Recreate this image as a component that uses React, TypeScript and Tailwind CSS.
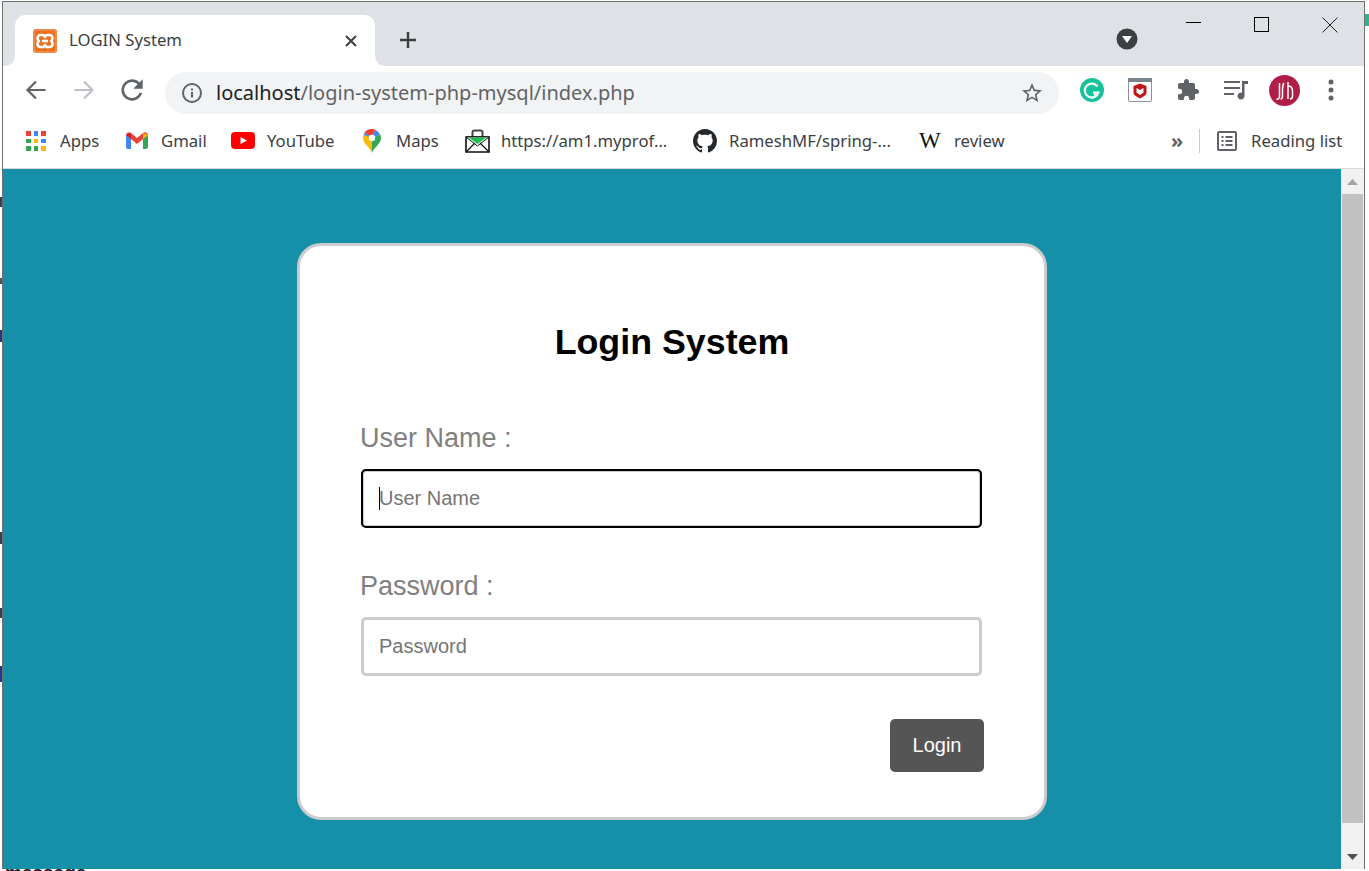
const UI_FONT = "font-['Noto_Sans',sans-serif]";

function Bookmark({ icon, label, textWidth, gap, ml }: { icon: React.ReactNode; label: string; textWidth: string; gap: string; ml: string }) {
  return (
    <div className={`flex shrink-0 items-center ${ml}`}>
      {icon}
      <span className={`${gap} ${textWidth} whitespace-nowrap text-[16.7px] text-[#3c4043]`}>{label}</span>
    </div>
  );
}

function AppsIcon() {
  const colors = ["#ea4335", "#4285f4", "#ea4335", "#34a853", "#fbbc04", "#4285f4", "#34a853", "#34a853", "#fbbc04"];
  return (
    <div className="grid h-[20px] w-[20px] grid-cols-3 gap-[3px]">
      {colors.map((c, i) => (
        <span key={i} className="block h-[4.6px] w-[4.6px]" style={{ background: c }} />
      ))}
    </div>
  );
}

function GmailIcon() {
  return (
    <svg width="22" height="17" viewBox="0 0 22 17">
      <path d="M0 3v12a2 2 0 0 0 2 2h3V7z" fill="#4285f4" />
      <path d="M22 3v12a2 2 0 0 1-2 2h-3V7z" fill="#34a853" />
      <path d="M0 3a3 3 0 0 1 5-2l6 5 6-5a3 3 0 0 1 5 2l-5 4-6 5-6-5z" fill="#ea4335" />
      <path d="M17 1l5 2-5 4z" fill="#fbbc04" />
      <path d="M0 3l5 4V1z" fill="#c5221f" />
    </svg>
  );
}

function YouTubeIcon() {
  return (
    <svg width="24" height="17" viewBox="0 0 24 17">
      <rect width="24" height="17" rx="4" fill="#ff0000" />
      <path d="M9.500 5l6.500 3.500L9.500 12z" fill="#fff" />
    </svg>
  );
}

function MapsIcon() {
  return (
    <svg width="18" height="24" viewBox="0 0 18 24">
      <path d="M9 24C8 19 0 15 0 9c0-1 .3-3 1-4l8 4z" fill="#fbbc04" />
      <path d="M9 24c1-5 9-9 9-15 0-1-.3-2.500-1-3.500L9 9z" fill="#34a853" />
      <path d="M1.500 3.500A9 9 0 0 1 9 0c1.500 0 2.500.3 3.500 1L9 9z" fill="#ea4335" />
      <path d="M12.500 1A9 9 0 0 1 17 5.500L9 9z" fill="#4285f4" />
      <path d="M1.500 3.500L9 9 1 6z" fill="#4285f4" />
      <circle cx="9" cy="9" r="3.200" fill="#fff" />
    </svg>
  );
}

function MailIcon() {
  return (
    <svg width="25" height="24" viewBox="0 0 25 24">
      <path d="M7.500 8V3.500A2 2 0 0 1 9.500 1.500h6a2 2 0 0 1 2 2V8" fill="none" stroke="#444" strokeWidth="2" />
      <path d="M1 8h23v15H1z" fill="#fff" stroke="#111" strokeWidth="1.600" />
      <path d="M1 8h23l-11.500 9z" fill="#fff" stroke="#111" strokeWidth="1" />
      <path d="M3.500 8.500h18l-9 6.500z" fill="#1fc050" />
      <path d="M1 23l9-9M24 23l-9-9" stroke="#111" strokeWidth="1.300" />
    </svg>
  );
}

function GithubIcon() {
  return (
    <svg width="24" height="24" viewBox="0 0 16 16" fill="#24292e">
      <path d="M8 0C3.580 0 0 3.580 0 8c0 3.540 2.290 6.530 5.470 7.590.4.070.55-.17.55-.38 0-.19-.01-.82-.01-1.490-2.010.37-2.530-.49-2.690-.94-.09-.23-.48-.94-.82-1.130-.28-.15-.68-.52-.01-.53.63-.01 1.080.58 1.230.82.72 1.210 1.870.87 2.330.66.070-.52.28-.87.51-1.070-1.780-.2-3.640-.89-3.640-3.950 0-.87.31-1.590.82-2.150-.08-.2-.36-1.020.08-2.120 0 0 .67-.21 2.200.82.64-.18 1.320-.27 2-.27s1.360.09 2 .27c1.530-1.040 2.200-.82 2.200-.82.44 1.100.16 1.920.08 2.120.51.56.82 1.270.82 2.150 0 3.070-1.870 3.750-3.650 3.950.29.25.54.73.54 1.480 0 1.070-.01 1.930-.01 2.200 0 .21.15.46.55.38A8.010 8.010 0 0 0 16 8c0-4.420-3.580-8-8-8z" />
    </svg>
  );
}

function GrammarlyIcon() {
  return (
    <svg width="24" height="24" viewBox="0 0 24 24">
      <circle cx="12" cy="12" r="12" fill="#15c39a" />
      <path d="M17.500 8.500A7 7 0 1 0 18.500 14.500H13" fill="none" stroke="#fff" strokeWidth="2.200" />
      <path d="M14 17.500l4-3.500" stroke="#fff" strokeWidth="2" />
    </svg>
  );
}

function McAfeeIcon() {
  return (
    <svg width="24" height="24" viewBox="0 0 24 24">
      <rect x="0.500" y="0.500" width="23" height="23" rx="1.500" fill="#fff" stroke="#8a9299" />
      <rect x="0" y="0" width="24" height="4" fill="#78848c" />
      <path d="M5.500 8l6.500-2.500L18.500 8v7c0 2-3 3.500-6.500 5.500-3.500-2-6.500-3.500-6.500-5.500z" fill="#c01818" />
      <path d="M8.500 10l3.500 2 3.500-2v4.500l-3.500 2.500-3.500-2.500z" fill="#fff" />
    </svg>
  );
}

function WindowIcons() {
  return (
    <div className="flex shrink-0 items-start">
      <span className="mt-[20px] h-px w-[15px] bg-black" />
      <span className="ml-[53px] mt-[15px] h-[15px] w-[15px] border border-black" />
      <svg className="ml-[53px] mt-[15px] mr-[26px]" width="16" height="16" viewBox="0 0 16 16">
        <path d="M0.500 0.500l15 15M15.500 0.500l-15 15" stroke="#222" strokeWidth="1" />
      </svg>
    </div>
  );
}

export default function App() {
  return (
    <div className={`relative h-[871px] w-[1369px] overflow-hidden bg-white ${UI_FONT}`}>
      {/* bits of the window behind the browser */}
      <span className="absolute left-0 top-[197px] h-[10px] w-[2px] bg-[#334155]" />
      <span className="absolute left-0 top-[278px] h-[6px] w-[2px] bg-[#475569]" />
      <span className="absolute left-0 top-[330px] h-[12px] w-[2px] bg-[#1e3a8a]" />
      <span className="absolute left-0 top-[532px] h-[12px] w-[2px] bg-[#334155]" />
      <span className="absolute left-0 top-[608px] h-[10px] w-[2px] bg-[#334155]" />
      <span className="absolute left-0 top-[666px] h-[16px] w-[2px] bg-[#1e3a8a]" />
      <span className="absolute left-[1365px] top-[14px] h-[12px] w-[4px] bg-[#2fb58c]" />
      <span className="absolute left-[5px] top-[863px] text-[19px] font-bold leading-[20px] font-['Liberation_Sans',sans-serif] text-[#222]">message</span>

      <div className="relative ml-[2px] mt-px flex h-[868px] w-[1363px] flex-col border-x-[1px] border-t-[1px] border-[#707070] bg-white">
        {/* tab strip */}
        <div className="flex h-[64px] bg-[#dee1e6]">
          <div className="relative ml-[12px] mt-[13px] flex h-[51px] w-[360px] shrink-0 items-center rounded-t-[10px] bg-white">
            <svg className="absolute bottom-0 left-[-10px]" width="10" height="10" viewBox="0 0 10 10">
              <path d="M10 0v10H0a10 10 0 0 0 10-10z" fill="#fff" />
            </svg>
            <svg className="absolute bottom-0 right-[-10px]" width="10" height="10" viewBox="0 0 10 10">
              <path d="M0 0v10h10a10 10 0 0 1-10-10z" fill="#fff" />
            </svg>
            <svg className="ml-[18px] shrink-0" width="24" height="24" viewBox="0 0 24 24">
              <rect width="24" height="24" rx="3" fill="#e8701f" />
              <rect x="1" y="1" width="22" height="22" rx="2" fill="none" stroke="#f5a56e" strokeWidth="1" />
              <path d="M10.500 6H7.500C5.500 6 4.500 7.500 4.500 9.500c0 1 .7 2 1.500 2.500-.8.5-1.500 1.500-1.500 2.500 0 2 1 3.500 3 3.500h3l1.500-2 1.500 2h3c2 0 3-1.500 3-3.500 0-1-.7-2-1.500-2.500.8-.5 1.500-1.500 1.500-2.500 0-2-1-3.500-3-3.500h-3L12 8z" fill="none" stroke="#fff" strokeWidth="2.600" strokeLinejoin="round" />
              <path d="M9 12h6" stroke="#fff" strokeWidth="2.600" />
            </svg>
            <span className="ml-[12px] mb-[2px] w-[240px] whitespace-nowrap text-[16.7px] text-[#3c4043]">LOGIN System</span>
            <svg className="ml-[36px] shrink-0" width="12" height="12" viewBox="0 0 12 12">
              <path d="M1 1l10 10M11 1L1 11" stroke="#3c4043" strokeWidth="2" />
            </svg>
          </div>
          <svg className="ml-[24px] mt-[29px] shrink-0" width="18" height="18" viewBox="0 0 18 18">
            <path d="M9 1v16M1 9h16" stroke="#3c4043" strokeWidth="2.400" />
          </svg>
          <svg className="ml-[699px] mt-[26px] shrink-0" width="22" height="22" viewBox="0 0 22 22">
            <circle cx="11" cy="11" r="10.500" fill="#3c4043" />
            <path d="M6 8h10l-5 7z" fill="#fff" />
          </svg>
          <div className="ml-[48px]">
            <WindowIcons />
          </div>
        </div>

        {/* toolbar */}
        <div className="flex h-[48px] items-center bg-white">
          <svg className="ml-[22px]" width="22" height="22" viewBox="0 0 22 22">
            <path d="M20.500 11H2.500M11 2.500L2.500 11l8.500 8.500" fill="none" stroke="#5f6368" strokeWidth="2.200" />
          </svg>
          <svg className="ml-[26px]" width="22" height="22" viewBox="0 0 22 22">
            <path d="M1.500 11h18M11 2.500l8.500 8.500-8.500 8.500" fill="none" stroke="#bdc1c6" strokeWidth="2.200" />
          </svg>
          <svg className="ml-[21px]" width="32" height="32" viewBox="0 0 24 24" fill="#5f6368">
            <path d="M17.650 6.350A7.960 7.960 0 0 0 12 4a8 8 0 1 0 7.730 10h-2.080A6 6 0 1 1 12 6c1.660 0 3.140.69 4.220 1.780L13 11h7V4l-2.350 2.350z" />
          </svg>
          <div className="ml-[17px] flex h-[42px] w-[894px] items-center self-end rounded-full bg-[#f1f3f4]">
            <svg className="ml-[17px]" width="20" height="20" viewBox="0 0 20 20">
              <circle cx="10" cy="10" r="9" fill="none" stroke="#5f6368" strokeWidth="2" />
              <path d="M10 9v5.500M10 5.500v2" stroke="#5f6368" strokeWidth="2" />
            </svg>
            <span className="ml-[14px] whitespace-nowrap text-[20px] text-[#202124]">
              localhost<span className="text-[#5f6368]">/login-system-php-mysql/index.php</span>
            </span>
            <svg className="ml-auto mr-[15px]" width="24" height="24" viewBox="0 0 24 24" fill="#5f6368">
              <path d="M22 9.240l-7.190-.62L12 2 9.190 8.630 2 9.240l5.460 4.730L5.820 21 12 17.270 18.180 21l-1.630-7.030L22 9.240zM12 15.400l-3.760 2.270 1-4.280-3.320-2.880 4.380-.38L12 6.100l1.710 4.040 4.380.38-3.320 2.880 1 4.280L12 15.400z" />
            </svg>
          </div>
          <div className="ml-[21px]"><GrammarlyIcon /></div>
          <div className="ml-[24px]"><McAfeeIcon /></div>
          <svg className="ml-[24px]" width="24" height="24" viewBox="0 0 24 24" fill="#5f6368">
            <path d="M20.500 11H19V7c0-1.100-.9-2-2-2h-4V3.500C13 2.120 11.880 1 10.500 1S8 2.120 8 3.500V5H4c-1.100 0-1.990.9-1.990 2v3.800H3.500c1.490 0 2.700 1.210 2.700 2.700s-1.210 2.700-2.700 2.700H2V20c0 1.100.9 2 2 2h3.800v-1.500c0-1.490 1.210-2.700 2.700-2.700 1.490 0 2.700 1.210 2.700 2.700V22H17c1.100 0 2-.9 2-2v-4h1.500c1.380 0 2.500-1.120 2.500-2.500S21.880 11 20.500 11z" />
          </svg>
          <svg className="ml-[24px]" width="24" height="24" viewBox="0 0 24 24" fill="#5f6368">
            <path d="M0 3h16v2H0zM0 9h16v2H0zM0 15h10v2H0z" />
            <path d="M18 3h6v3h-3.500v12a3.500 3.500 0 1 1-2.500-3.300z" />
          </svg>
          <svg className="ml-[21px]" width="31" height="31" viewBox="0 0 31 31">
            <circle cx="15.500" cy="15.500" r="15.500" fill="#b01e47" />
            <path d="M10.500 8v13c0 2.500-1.500 3.500-3 3M15 8c-1.500 2-1.500 4-1.500 7v6c0 2-1 3-2 3M19 7v17M19 11c3 0 4.500 2 4.500 5v5c0 2-1 3-2.500 3" fill="none" stroke="#fff" strokeWidth="1.500" />
          </svg>
          <svg className="ml-[28px]" width="6" height="22" viewBox="0 0 6 22" fill="#5f6368">
            <circle cx="3" cy="3" r="2.500" />
            <circle cx="3" cy="11" r="2.500" />
            <circle cx="3" cy="19" r="2.500" />
          </svg>
        </div>

        {/* bookmarks bar */}
        <div className="flex h-[55px] items-center border-b border-[#d9d9d9] bg-white">
          <Bookmark ml="ml-[23px]" gap="ml-[14px]" textWidth="w-[41px]" label="Apps" icon={<AppsIcon />} />
          <Bookmark ml="ml-[25px]" gap="ml-[13px]" textWidth="w-[45px]" label="Gmail" icon={<GmailIcon />} />
          <Bookmark ml="ml-[25px]" gap="ml-[12px]" textWidth="w-[69px]" label="YouTube" icon={<YouTubeIcon />} />
          <Bookmark ml="ml-[27px]" gap="ml-[15px]" textWidth="w-[44px]" label="Maps" icon={<MapsIcon />} />
          <Bookmark ml="ml-[25px]" gap="ml-[11px]" textWidth="w-[167px]" label="https://am1.myprof..." icon={<MailIcon />} />
          <Bookmark ml="ml-[25px]" gap="ml-[12px]" textWidth="w-[165px]" label="RameshMF/spring-..." icon={<GithubIcon />} />
          <Bookmark
            ml="ml-[25px]"
            gap="ml-[13px]"
            textWidth="w-[51px]"
            label="review"
            icon={<span className="w-[22px] font-['Liberation_Serif',serif] text-[23px] leading-none text-[#111]">W</span>}
          />
          <span className="ml-[166px] w-[14px] text-[20px] font-bold leading-none text-[#5f6368]">»</span>
          <span className="ml-[14px] h-[24px] w-px bg-[#c8cacd]" />
          <svg className="ml-[17px]" width="20" height="20" viewBox="0 0 20 20">
            <rect x="1" y="1" width="18" height="18" rx="1" fill="none" stroke="#5f6368" strokeWidth="2" />
            <path d="M4.500 6h2M8.500 6h7M4.500 10h2M8.500 10h7M4.500 14h2M8.500 14h7" stroke="#5f6368" strokeWidth="2" />
          </svg>
          <span className="ml-[14px] whitespace-nowrap text-[16.7px] text-[#3c4043]">Reading list</span>
        </div>

        {/* page */}
        <div className="flex min-h-0 flex-1">
          <main className="flex flex-1 justify-center bg-[#1690a8] font-['Liberation_Sans',sans-serif]">
            <div className="mt-[74px] h-[577px] w-[750px] rounded-[24px] border-[3px] border-[#ccc] bg-white px-[61px] pt-[76px]">
              <h1 className="text-center text-[35.8px] font-bold leading-[40px] text-black">Login System</h1>
              <label className="-ml-px mt-[61px] block text-[27px] leading-[31px] text-[#808080]">User Name :</label>
              <div className="relative mt-[15px]">
                <input
                  placeholder="User Name"
                  className="h-[59px] w-[621px] rounded-[5px] border-[3px] border-[#ccc] bg-white px-[15px] text-[20px] outline-2 outline-offset-[-2px] outline-black placeholder:text-[#757575]"
                />
                <span className="absolute left-[18px] top-[18px] h-[23px] w-px bg-black" />
              </div>
              <label className="-ml-px mt-[43px] block text-[27px] leading-[31px] text-[#808080]">Password :</label>
              <input
                placeholder="Password"
                className="mt-[15px] block h-[59px] w-[621px] rounded-[5px] border-[3px] border-[#ccc] bg-white px-[15px] text-[20px] placeholder:text-[#757575]"
              />
              <div className="mt-[43px] flex w-[623px] justify-end">
                <button className="h-[53px] w-[94px] rounded-[5px] bg-[#555] pb-[2px] text-[20px] text-white">Login</button>
              </div>
            </div>
          </main>

          {/* scrollbar */}
          <div className="flex w-[23px] flex-col items-center bg-[#f1f1f1]">
            <svg className="mt-[10px]" width="11" height="6" viewBox="0 0 11 6"><path d="M5.500 0L11 6H0z" fill="#a3a3a3" /></svg>
            <div className="mt-[9px] h-[629px] w-[21px] bg-[#c1c1c1]" />
            <svg className="mt-[31px]" width="11" height="6" viewBox="0 0 11 6"><path d="M0 0h11L5.500 6z" fill="#505050" /></svg>
          </div>
        </div>
      </div>
    </div>
  );
}
